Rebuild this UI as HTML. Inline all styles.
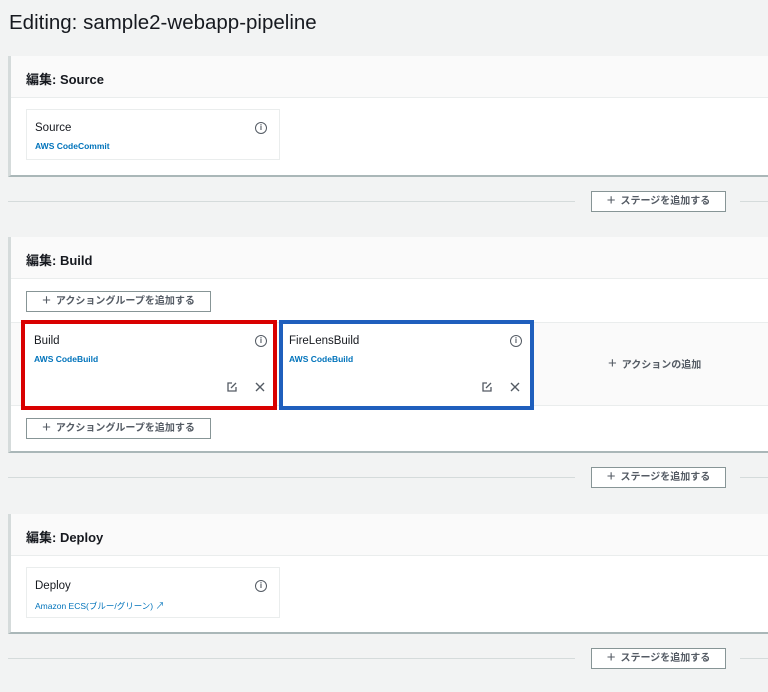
<!DOCTYPE html>
<html><head><meta charset="utf-8"><style>
*{box-sizing:border-box;margin:0;padding:0}
body{width:768px;height:692px;background:#f2f3f3;font-family:"Liberation Sans","Noto Sans CJK JP",sans-serif;color:#16191f;position:relative;overflow:hidden}
.a{position:absolute}
.title{left:9px;top:11px;font-size:20.5px;color:#16191f}
.panel{left:8px;width:760px;background:#fff;border-left:3px solid #d5dbdb;border-bottom:2px solid #aab7b8}
.hdr{position:absolute;left:0;right:0;top:0;height:42px;background:#fafafa;border-bottom:1px solid #eaeded;font-weight:bold;font-size:13px;padding:13px 0 0 15px}
.card{position:absolute;background:#fff;border:1px solid #eaeded}
.cn{position:absolute;left:8px;top:12px;font-size:11.5px}
.cl{position:absolute;left:8px;top:31px;font-size:8.5px;color:#0073bb;font-weight:bold}
.info{position:absolute;width:12px;height:12px;border:1.4px solid #545b64;border-radius:50%;font-size:8px;font-weight:bold;text-align:center;line-height:10px;color:#545b64}
.btn{position:absolute;background:#fff;border:1px solid #879596;font-size:10px;font-weight:bold;color:#545b64;text-align:center;line-height:18px}
.btn b{font-size:15px;font-weight:normal;vertical-align:-1px;margin-right:5px}
.sep{position:absolute;height:1px;background:#d5dbdb}
</style></head><body>
<div class="a title">Editing: sample2-webapp-pipeline</div>

<div class="a panel" style="top:56px;height:121px">
<div class="hdr">編集: Source</div>
<div class="card" style="left:15px;top:53px;width:254px;height:51px"><div class="cn">Source</div><div class="cl">AWS CodeCommit</div><div class="info" style="left:228px;top:12px">i</div></div>
</div>
<div class="sep" style="top:201px;left:8px;width:567px"></div><div class="sep" style="top:201px;left:740px;width:28px"></div>
<div class="btn" style="left:591px;top:191px;width:135px;height:21px"><b>+</b>ステージを追加する</div>

<div class="a panel" style="top:237px;height:216px">
<div class="hdr">編集: Build</div>
<div class="btn" style="left:15px;top:54px;width:185px;height:21px"><b>+</b>アクショングループを追加する</div>
<div class="a" style="left:0;right:0;top:85px;height:84px;background:#fafafa;border-top:1px solid #eaeded;border-bottom:1px solid #eaeded"></div>
<div class="card" style="left:10px;top:83px;width:256px;height:90px;border:4px solid #d90000"><div class="cn" style="left:9px;top:11px">Build</div><div class="cl" style="left:9px;top:30px">AWS CodeBuild</div><div class="info" style="left:230px;top:11px">i</div>
<svg class="a" style="left:201px;top:57px" width="12" height="12" viewBox="0 0 12 12"><path d="M6 2H2v8h8V6M5 7l5-5" stroke="#545b64" stroke-width="1.3" fill="none"/></svg>
<svg class="a" style="left:229px;top:57px" width="12" height="12" viewBox="0 0 12 12"><path d="M2 2l8 8M10 2l-8 8" stroke="#545b64" stroke-width="1.4"/></svg></div>
<div class="card" style="left:268px;top:83px;width:255px;height:90px;border:4px solid #1f5fbd"><div class="cn" style="left:6px;top:11px">FireLensBuild</div><div class="cl" style="left:6px;top:30px">AWS CodeBuild</div><div class="info" style="left:227px;top:11px">i</div>
<svg class="a" style="left:198px;top:57px" width="12" height="12" viewBox="0 0 12 12"><path d="M6 2H2v8h8V6M5 7l5-5" stroke="#545b64" stroke-width="1.3" fill="none"/></svg>
<svg class="a" style="left:226px;top:57px" width="12" height="12" viewBox="0 0 12 12"><path d="M2 2l8 8M10 2l-8 8" stroke="#545b64" stroke-width="1.4"/></svg></div>
<div class="a" style="left:597px;top:118px;font-size:10px;font-weight:bold;color:#545b64"><span style="font-size:15px;font-weight:normal;margin-right:5px">+</span>アクションの追加</div>
<div class="btn" style="left:15px;top:181px;width:185px;height:21px"><b>+</b>アクショングループを追加する</div>
</div>
<div class="sep" style="top:477px;left:8px;width:567px"></div><div class="sep" style="top:477px;left:740px;width:28px"></div>
<div class="btn" style="left:591px;top:467px;width:135px;height:21px"><b>+</b>ステージを追加する</div>

<div class="a panel" style="top:514px;height:120px">
<div class="hdr">編集: Deploy</div>
<div class="card" style="left:15px;top:53px;width:254px;height:51px"><div class="cn">Deploy</div><div class="cl" style="font-weight:normal">Amazon ECS(ブルー/グリーン) <span style="font-size:9px">↗</span></div><div class="info" style="left:228px;top:12px">i</div></div>
</div>
<div class="sep" style="top:658px;left:8px;width:567px"></div><div class="sep" style="top:658px;left:740px;width:28px"></div>
<div class="btn" style="left:591px;top:648px;width:135px;height:21px"><b>+</b>ステージを追加する</div>
</body></html>
